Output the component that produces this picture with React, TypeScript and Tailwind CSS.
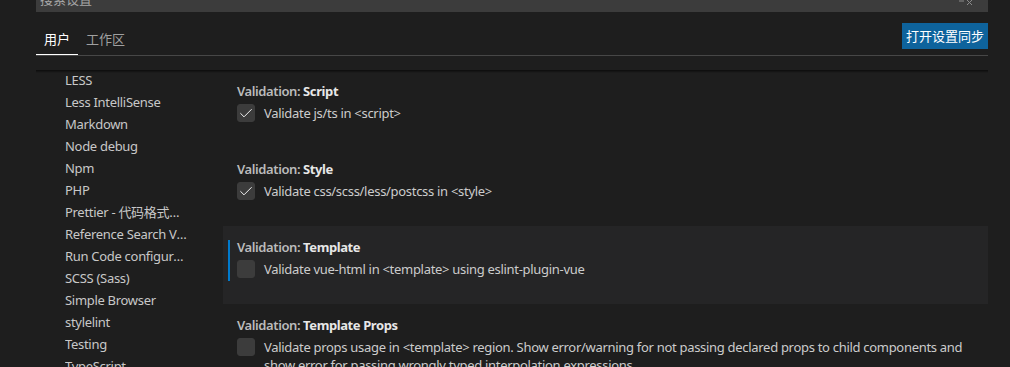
import { Check } from 'lucide-react';

const font = { fontFamily: '"Noto Sans", "Noto Sans CJK SC", sans-serif' };

const tocItems = [
    'LESS',
    'Less IntelliSense',
    'Markdown',
    'Node debug',
    'Npm',
    'PHP',
    'Prettier - 代码格式化程序',
    'Reference Search View',
    'Run Code configuration',
    'SCSS (Sass)',
    'Simple Browser',
    'stylelint',
    'Testing',
    'TypeScript',
];

const settings = [
    { category: 'Validation: ', name: 'Script', desc: 'Validate js/ts in <script>', checked: true },
    { category: 'Validation: ', name: 'Style', desc: 'Validate css/scss/less/postcss in <style>', checked: true },
    { category: 'Validation: ', name: 'Template', desc: 'Validate vue-html in <template> using eslint-plugin-vue', checked: false, focused: true },
    {
        category: 'Validation: ',
        name: 'Template Props',
        desc: 'Validate props usage in <template> region. Show error/warning for not passing declared props to child components and show error for passing wrongly typed interpolation expressions.',
        checked: false,
    },
];

function Checkbox({ checked }: { checked: boolean }) {
    return (
        <div className="w-[18px] h-[18px] rounded-[3px] bg-[#3c3c3c] border border-[#3c3c3c] flex items-center justify-center flex-shrink-0">
            {checked && <Check className="w-[17px] h-[17px] text-[#f0f0f0]" strokeWidth={1.5} />}
        </div>
    );
}

export default function App() {
    return (
        <div className="w-[1010px] h-[367px] overflow-hidden bg-[#1e1e1e] text-[13px]" style={font}>
            <div className="ml-[36px] w-[952px]">
                {/* Search box (scrolled partly out of view) */}
                <div className="-mt-[14px] h-[26px] bg-[#3c3c3c] flex items-center pl-[4px] pr-[12px]">
                    <span className="flex-1 text-[#a6a6a6] text-[13px] leading-[26px]">搜索设置</span>
                    <svg width="16" height="16" viewBox="0 0 16 16" fill="none" stroke="#8a8a8a" strokeWidth="1" className="mr-[2px]">
                        <path d="M1 4h9M1 7h7M1 10h5M9 9l5 5M14 9l-5 5" />
                    </svg>
                </div>

                {/* Tabs header */}
                <div className="flex items-end justify-between h-[44px] border-b border-[#474747]">
                    <div className="flex">
                        <div className="px-[8px] h-[30px] flex items-center text-white border-b border-white -mb-px">用户</div>
                        <div className="px-[8px] h-[30px] flex items-center text-[#a0a0a0]">工作区</div>
                    </div>
                    <button className="mb-[6px] h-[26px] px-[4px] bg-[#0e639c] text-white text-[13px] leading-[26px]">打开设置同步</button>
                </div>

                {/* Body */}
                <div className="mt-[14px] relative flex h-[300px] overflow-hidden">
                    <div className="absolute top-0 left-0 right-0 h-[3px] bg-gradient-to-b from-[#0c0c0c] to-transparent" />
                    {/* TOC */}
                    <div className="w-[187px] pl-[29px] -mt-px flex-shrink-0">
                        {tocItems.map(item => (
                            <div key={item} className="h-[22px] leading-[22px] text-[#c8c8c8] w-[123px] truncate tracking-[-0.3px]">
                                {item}
                            </div>
                        ))}
                    </div>

                    {/* Settings list */}
                    <div className="flex-1">
                        {settings.map(s => (
                            <div
                                key={s.name}
                                className={`relative h-[78px] pl-[14px] pr-[8px] pt-[12px] ${s.focused ? 'bg-[#252526]' : ''}`}
                            >
                                {s.focused && <div className="absolute left-[5px] top-[14px] w-[2px] h-[41px] bg-[#007acc]" />}
                                <div className="h-[18px] leading-[18px] text-[#bbbbbb] font-semibold tracking-[-0.4px]">
                                    {s.category}
                                    <span className="text-[#e7e7e7] font-bold">{s.name}</span>
                                </div>
                                <div className="flex gap-[9px] mt-[4px]">
                                    <Checkbox checked={s.checked} />
                                    <div className="text-[#cccccc] leading-[18px] tracking-[-0.3px]">{s.desc}</div>
                                </div>
                            </div>
                        ))}
                    </div>
                </div>
            </div>
        </div>
    );
}
